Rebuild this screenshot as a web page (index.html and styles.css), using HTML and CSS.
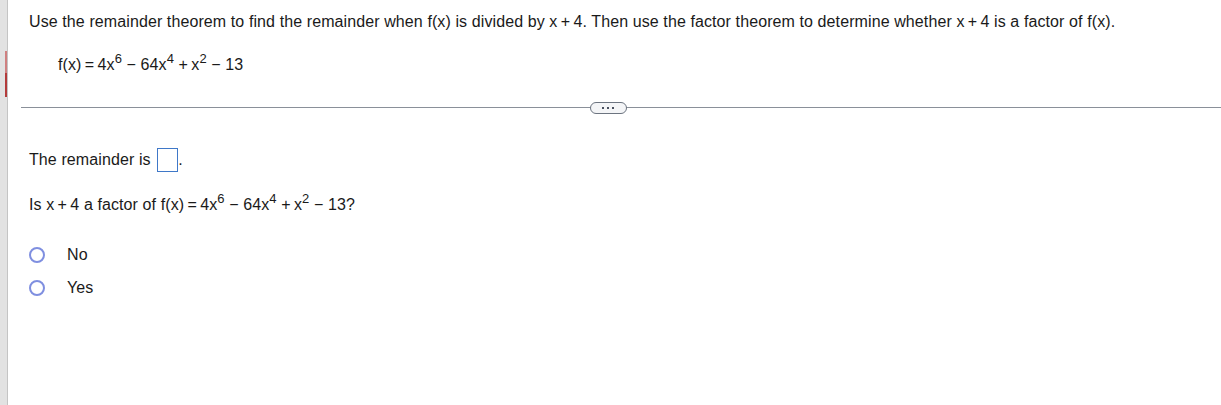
FILE: index.html
```html
<!DOCTYPE html>
<html lang="en">
<head>
  <meta charset="UTF-8">
  <title>Remainder theorem</title>
  <link rel="stylesheet" href="styles.css">
</head>
<body>
  <div class="page">
    <!-- left rail with the red marker -->
    <div class="rail"><div class="marker"></div></div>

    <div class="content">
      <div class="question">
        <p class="prompt">Use the remainder theorem to find the remainder when f(x) is divided by x&thinsp;+&thinsp;4. Then use the factor theorem to determine whether x&thinsp;+&thinsp;4 is a factor of f(x).</p>
        <p class="formula">f(x)&thinsp;=&thinsp;4x<sup>6</sup> &minus; 64x<sup>4</sup> +&thinsp;x<sup>2</sup> &minus; 13</p>
      </div>

      <div class="divider">
        <button class="more"><span></span><span></span><span></span></button>
      </div>

      <div class="answer">
        <p class="line">The remainder is <span class="box"></span>.</p>
        <p class="line">Is x&thinsp;+&thinsp;4 a factor of f(x)&thinsp;=&thinsp;4x<sup>6</sup> &minus; 64x<sup>4</sup> +&thinsp;x<sup>2</sup> &minus; 13?</p>
        <ul class="choices">
          <li><span class="radio"></span>No</li>
          <li><span class="radio"></span>Yes</li>
        </ul>
      </div>
    </div>
  </div>
</body>
</html>
```

FILE: styles.css
```css
/* page base */
html, body {
  margin: 0;
  padding: 0;
  background: #fff;
  font-family: 'Liberation Sans', Arial, sans-serif;
  font-size: 16px;
  letter-spacing: 0.1px;
  color: #1a1a1a;
}

.page {
  display: flex;
  height: 405px;
}

/* gray strip on the left edge */
.rail {
  width: 7px;
  flex-shrink: 0;
  background: #e2e2e2;
  border-right: 1px solid #c4c4c4;
  padding-top: 51px;
}

.marker {
  margin-left: 5px;
  width: 2px;
  height: 46px;
  background: linear-gradient(#cf8080 0 22px, #b33b3b 22px);
}

.content {
  flex: 1;
  padding-left: 21px;
}

p {
  margin: 0;
}

.question {
  padding-top: 13px;
}

.prompt, .formula {
  line-height: 18px;
}

.formula {
  margin-top: 25px;
  padding-left: 29px;
}

sup {
  font-size: 13px;
  vertical-align: 7px;
  line-height: 0;
}

/* divider with the small pill button */
.divider {
  margin-top: 33px;
  margin-left: -8px;
  height: 1px;
  background: #8a9099;
  display: flex;
  justify-content: center;
  align-items: center;
}

.more {
  width: 37px;
  height: 12px;
  padding: 0;
  margin-left: -26px;
  border: 1px solid #6c7480;
  border-radius: 6px;
  background: #f4f5f7;
  display: flex;
  justify-content: center;
  align-items: center;
  gap: 3px;
}

.more span {
  width: 2px;
  height: 2px;
  background: #4a5160;
}

.answer {
  padding-top: 40px;
}

.line {
  line-height: 24px;
  margin-bottom: 21px;
}

.box {
  display: inline-block;
  width: 19px;
  height: 22px;
  border: 1px solid #3f78c8;
  vertical-align: -7px;
  margin-left: 2px;
}

.choices {
  list-style: none;
  margin: 0;
  padding: 0;
}

.choices li {
  display: flex;
  align-items: center;
  height: 33px;
}

.radio {
  width: 12px;
  height: 12px;
  border: 2px solid #7f8fe0;
  border-radius: 50%;
  margin-right: 22px;
}
```
